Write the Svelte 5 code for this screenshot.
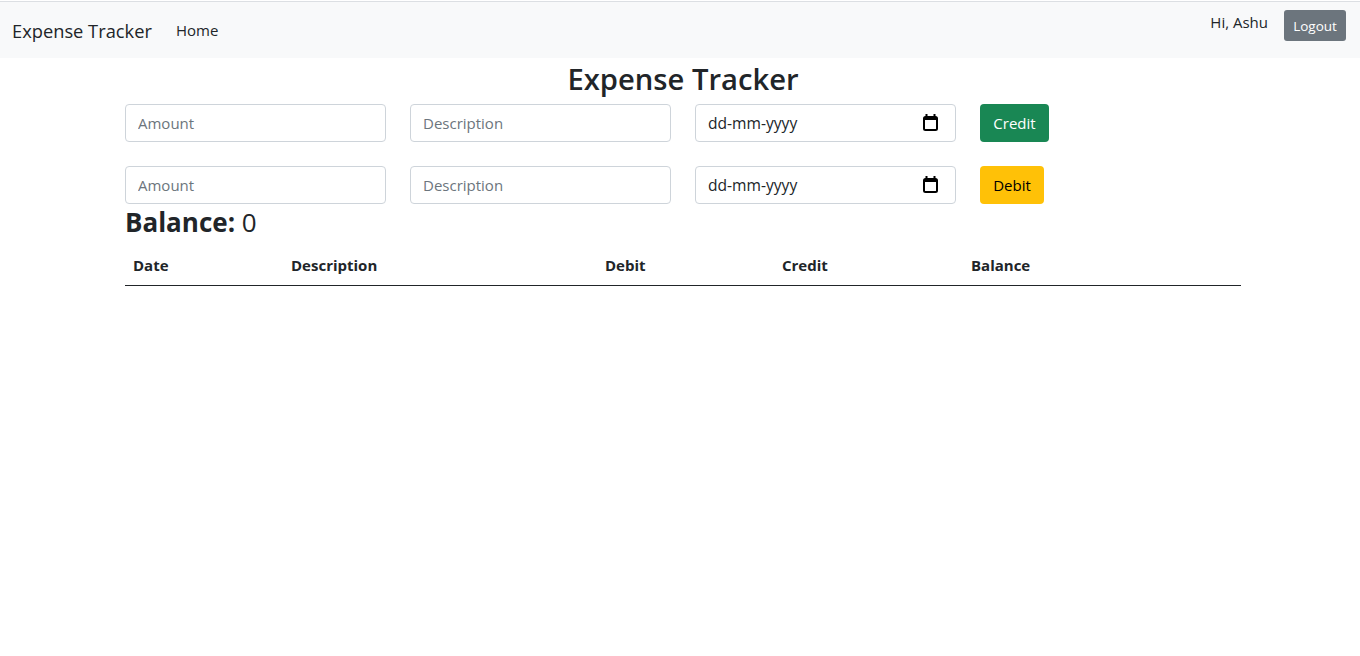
<script>
	const entryRows = [
		{ label: 'Credit', kind: 'credit' },
		{ label: 'Debit', kind: 'debit' }
	];
	const columns = ['Date', 'Description', 'Debit', 'Credit', 'Balance'];
	let balance = 0;
</script>

<nav class="navbar">
	<a class="brand" href="#top">Expense Tracker</a>
	<a class="nav-link" href="#top">Home</a>
	<div class="nav-right">
		<span class="greeting">Hi, Ashu</span>
		<button class="btn btn-logout">Logout</button>
	</div>
</nav>

<main class="container">
	<h2 class="title">Expense Tracker</h2>

	{#each entryRows as row}
		<form class="entry-row" on:submit|preventDefault>
			<input class="field" type="number" placeholder="Amount" />
			<input class="field" type="text" placeholder="Description" />
			<div class="field date-field">
				<span class="date-text">dd-mm-yyyy</span>
				<svg class="cal" viewBox="0 0 15 18" width="15" height="18" aria-hidden="true">
					<path d="M3.5 0v3M11.5 0v3" stroke="#000" stroke-width="2" fill="none" />
					<rect x="1" y="3" width="13" height="13" rx="1.5" fill="none" stroke="#000" stroke-width="2" />
					<rect x="1" y="3" width="13" height="3" fill="#000" />
				</svg>
			</div>
			<button class="btn btn-entry {row.kind}">{row.label}</button>
		</form>
	{/each}

	<h3 class="balance"><b>Balance:</b> {balance}</h3>

	<table class="ledger">
		<colgroup>
			<col style="width: 158px" />
			<col style="width: 314px" />
			<col style="width: 177px" />
			<col style="width: 189px" />
			<col />
		</colgroup>
		<thead>
			<tr>
				{#each columns as col}
					<th>{col}</th>
				{/each}
			</tr>
		</thead>
		<tbody></tbody>
	</table>
</main>

<style>
	:global(body) {
		margin: 0;
		background: #fff;
		color: #212529;
		font-family: "Open Sans", "Noto Sans", sans-serif;
		font-size: 16px;
		line-height: 1.5;
		overflow: hidden;
	}

	.navbar {
		display: flex;
		height: 56px;
		margin-top: 1px;
		padding-left: 12px;
		padding-right: 14px;
		background: #f8f9fa;
		border-top: 1px solid #dcdfe3;
	}

	.brand {
		margin-top: 14px;
		font-size: 18.3px;
		line-height: 30px;
		color: #212529;
		text-decoration: none;
	}

	.nav-link {
		margin-top: 16px;
		margin-left: 24px;
		font-size: 15px;
		line-height: 24px;
		color: #212529;
		text-decoration: none;
	}

	.nav-right {
		display: flex;
		align-items: flex-start;
		gap: 16px;
		margin-left: auto;
	}

	.greeting {
		margin-top: 8px;
		font-size: 15px;
		line-height: 24px;
	}

	.btn {
		font-family: inherit;
		border: 1px solid transparent;
		cursor: pointer;
	}

	.btn-logout {
		margin-top: 8px;
		width: 62px;
		height: 31px;
		padding: 0;
		font-size: 13.5px;
		color: #fff;
		background: #6c757d;
		border-radius: 3px;
	}

	.container {
		width: 1116px;
		margin-left: 125px;
	}

	.title {
		margin: 4px 0 8px;
		font-size: 29.2px;
		line-height: 34px;
		font-weight: 600;
		text-align: center;
	}

	.entry-row {
		display: flex;
		gap: 24px;
		margin-bottom: 24px;
	}

	.entry-row:last-of-type {
		margin-bottom: 0;
	}

	.field {
		box-sizing: border-box;
		width: 261px;
		height: 38px;
		padding: 0 12px;
		font-family: inherit;
		font-size: 15px;
		color: #212529;
		background: #fff;
		border: 1px solid #ced4da;
		border-radius: 4px;
	}

	.field::placeholder {
		color: #6c757d;
		opacity: 1;
	}

	.date-field {
		display: flex;
		align-items: center;
		justify-content: space-between;
		padding-right: 17px;
		font-size: 15.6px;
	}

	.date-text {
		padding-top: 2px;
	}

	.cal {
		display: block;
	}

	.btn-entry {
		height: 38px;
		padding: 0 12px;
		font-size: 15px;
		border-radius: 4px;
	}

	.credit {
		width: 69px;
		color: #fff;
		background: #198754;
	}

	.debit {
		width: 64px;
		color: #000;
		background: #ffc107;
	}

	.balance {
		margin: 1px 0 7px;
		font-size: 26px;
		line-height: 34px;
		font-weight: 400;
	}

	.balance b {
		font-weight: 700;
	}

	.ledger {
		width: 100%;
		table-layout: fixed;
		border-collapse: collapse;
	}

	.ledger th {
		padding: 8px;
		font-size: 15px;
		line-height: 23px;
		font-weight: 700;
		text-align: left;
		border-bottom: 1px solid #212529;
	}
</style>
